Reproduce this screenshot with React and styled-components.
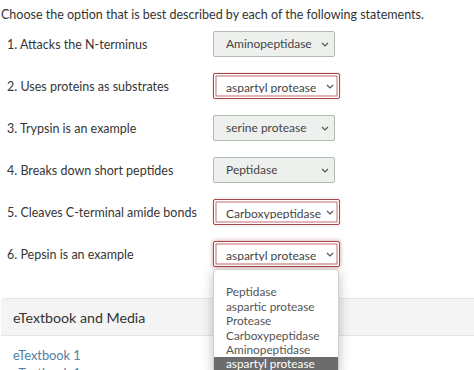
import React from 'react';
import styled, { createGlobalStyle } from 'styled-components';

const GlobalStyle = createGlobalStyle`
  html, body {
    margin: 0;
    padding: 0;
    background: #fff;
    overflow: hidden;
  }
  body {
    font-family: Lato, "Open Sans", sans-serif;
    color: #333;
  }
`;

const Page = styled.div`
  width: 474px;
  height: 370px;
  overflow: hidden;
`;

const Prompt = styled.div`
  font-size: 12.5px;
  line-height: 20px;
  padding: 5px 0 0 1px;
  color: #333;
  white-space: nowrap;
`;

const Questions = styled.div`
  display: flex;
  flex-direction: column;
  padding: 0 0 0 7px;
  margin-top: -2px;
`;

const Row = styled.div`
  display: grid;
  grid-template-columns: 206px auto;
  align-items: center;
  height: 42px;
`;

const Label = styled.div`
  font-size: 12.5px;
  color: #363636;
  white-space: nowrap;
`;

const SelectWrap = styled.div`
  position: relative;
  justify-self: start;
`;

const Select = styled.div`
  box-sizing: border-box;
  display: flex;
  align-items: center;
  justify-content: space-between;
  height: 26px;
  width: ${p => (p.$wrong ? 127 : 122)}px;
  padding: 0 5px 0 12px;
  font-size: 12px;
  color: #444;
  border-radius: 2px;
  background: ${p => (p.$wrong ? '#fff' : '#eef0ee')};
  border: 1px solid ${p => (p.$wrong ? '#a8474a' : '#adbcad')};
  box-shadow: ${p =>
    p.$wrong
      ? `inset 0 0 0 1.5px #fff, inset 0 0 0 2.5px #c46a6c, 0 0 ${p.$focus ? 4 : 2}px rgba(170, 60, 60, ${p.$focus ? 0.55 : 0.3})`
      : 'none'};
  overflow: hidden;
`;

// the wrong answers sit low in their box and get their descenders clipped
const Value = styled.span`
  display: block;
  white-space: nowrap;
  line-height: ${p => (p.$low ? '14px' : '24px')};
  align-self: ${p => (p.$low ? 'flex-start' : 'center')};
  padding-top: ${p => (p.$low ? '7px' : '0')};
  height: ${p => (p.$low ? '12.4px' : 'auto')};
  overflow: hidden;
`;

const Chevron = () => (
  <svg width="8" height="5" viewBox="0 0 8 5">
    <path d="M1 1 L4 4 L7 1" fill="none" stroke="#555" strokeWidth="1.2" />
  </svg>
);

const Dropdown = styled.div`
  position: absolute;
  top: calc(100% + 2px);
  left: 0;
  width: 126px;
  box-sizing: border-box;
  padding-top: 1px;
  background: #fff;
  border: 1px solid #d0d0d0;
  border-radius: 4px 4px 0 0;
  box-shadow: 0 3px 12px rgba(0, 0, 0, 0.25);
  z-index: 10;
`;

const Option = styled.div`
  height: 14.4px;
  line-height: 14.4px;
  padding-left: 12px;
  font-size: 11.8px;
  white-space: nowrap;
  color: ${p => (p.$active ? '#fff' : '#555')};
  background: ${p => (p.$active ? '#6c6c6c' : 'transparent')};
`;

const Resources = styled.div`
  margin-top: 23px;
  margin-left: 1px;
`;

const ResourcesHead = styled.div`
  height: 36px;
  display: flex;
  align-items: center;
  padding-left: 12px;
  font-size: 14.2px;
  color: #333;
  background: #f4f4f4;
  border-top: 1px solid #e4e4e4;
  border-bottom: 1px solid #e4e4e4;
  border-top-left-radius: 4px;
`;

const Links = styled.div`
  padding: 10px 0 0 12px;
  display: flex;
  flex-direction: column;
`;

const Link = styled.a`
  font-size: 12.8px;
  line-height: 18px;
  color: #4f7fa8;
  text-decoration: none;
`;

const questions = [
  { label: '1. Attacks the N-terminus', value: 'Aminopeptidase' },
  { label: '2. Uses proteins as substrates', value: 'aspartyl protease', wrong: true },
  { label: '3. Trypsin is an example', value: 'serine protease' },
  { label: '4. Breaks down short peptides', value: 'Peptidase' },
  { label: '5. Cleaves C-terminal amide bonds', value: 'Carboxypeptidase', wrong: true },
  { label: '6. Pepsin is an example', value: 'aspartyl protease', wrong: true, open: true },
];

const options = ['', 'Peptidase', 'aspartic protease', 'Protease', 'Carboxypeptidase', 'Aminopeptidase', 'aspartyl protease'];

export default function App() {
  return (
    <Page>
      <GlobalStyle />
      <Prompt>Choose the option that is best described by each of the following statements.</Prompt>
      <Questions>
        {questions.map(q => (
          <Row key={q.label}>
            <Label>{q.label}</Label>
            <SelectWrap>
              <Select $wrong={q.wrong} $focus={q.open}>
                <Value $low={q.wrong}>{q.value}</Value>
                <Chevron />
              </Select>
              {q.open && (
                <Dropdown>
                  {options.map((o, i) => (
                    <Option key={i} $active={o === q.value}>{o || '\u00a0'}</Option>
                  ))}
                </Dropdown>
              )}
            </SelectWrap>
          </Row>
        ))}
      </Questions>
      <Resources>
        <ResourcesHead>eTextbook and Media</ResourcesHead>
        <Links>
          <Link href="#">eTextbook 1</Link>
          <Link href="#">eTextbook 1</Link>
        </Links>
      </Resources>
    </Page>
  );
}
